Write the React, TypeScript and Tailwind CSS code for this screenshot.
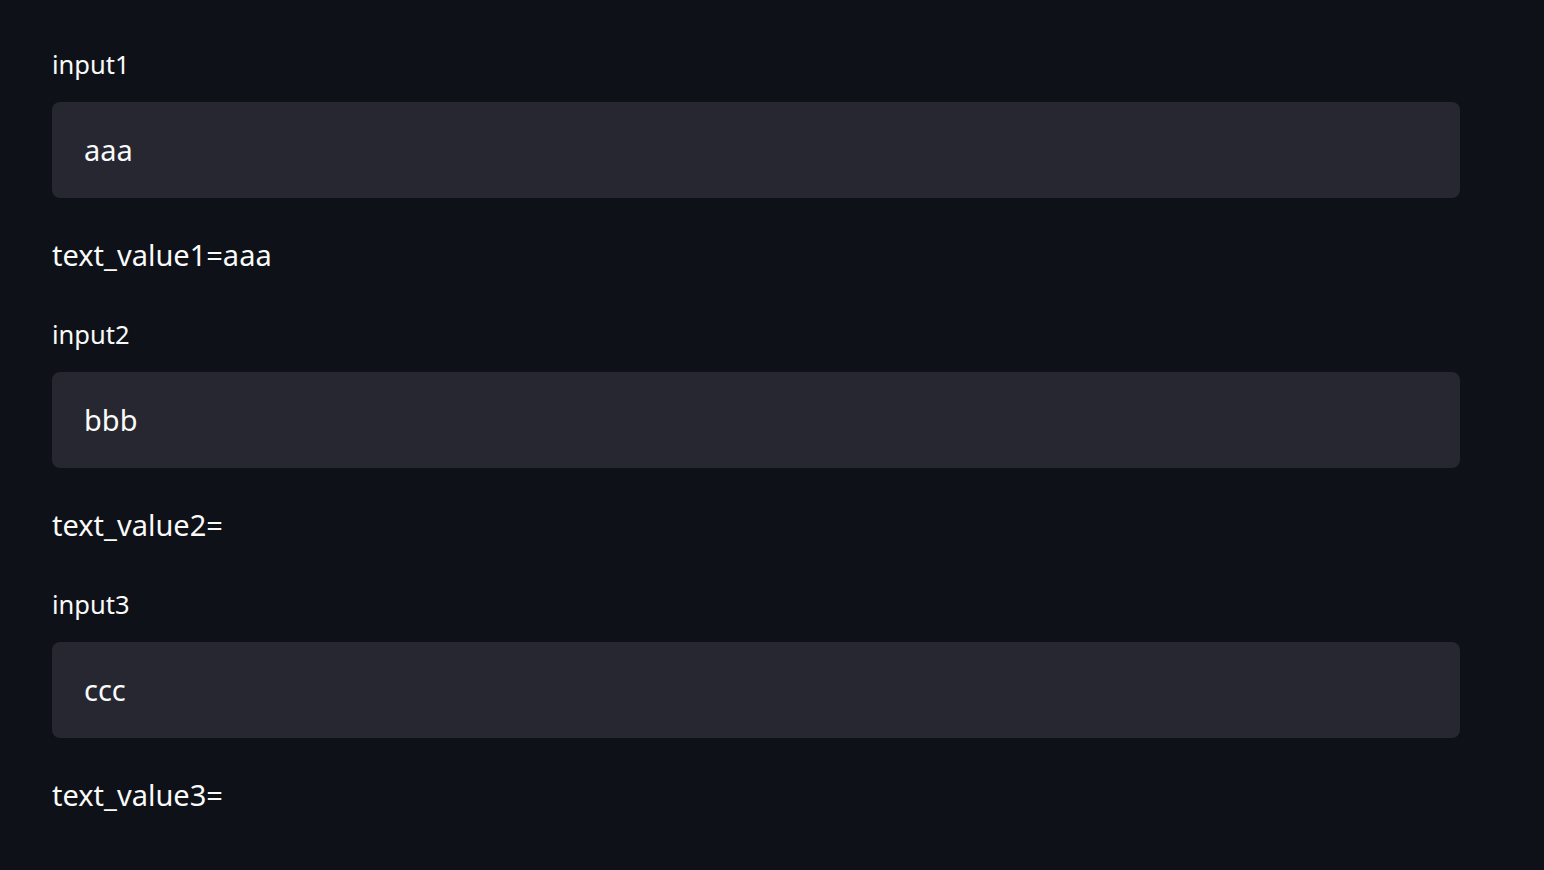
const fields = [
  { label: 'input1', value: 'aaa', output: 'text_value1=aaa' },
  { label: 'input2', value: 'bbb', output: 'text_value2=' },
  { label: 'input3', value: 'ccc', output: 'text_value3=' },
];

export default function App() {
  return (
    <main
      className="min-h-screen w-full bg-[#0e1117] text-[#fafafa] px-[52px] pt-[46px]"
      style={{ fontFamily: '"Noto Sans", "Open Sans", sans-serif' }}
    >
      <div className="w-[1408px] flex flex-col">
        {fields.map((f) => (
          <div key={f.label} className="flex flex-col pb-[40px]">
            <label className="text-[25.5px] leading-[36px]">{f.label}</label>
            <div className="mt-[20px] h-[96px] rounded-lg bg-[#262730] flex items-center px-[32px]">
              <span className="text-[29px] leading-[42px]">{f.value}</span>
            </div>
            <p className="mt-[36px] text-[29px] leading-[42px]">{f.output}</p>
          </div>
        ))}
      </div>
    </main>
  );
}
